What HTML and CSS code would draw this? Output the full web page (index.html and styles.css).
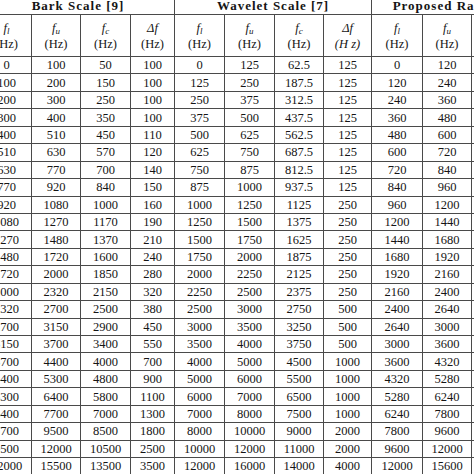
FILE: index.html
```html
<!DOCTYPE html>
<html>
<head>
<meta charset="utf-8">
<link rel="stylesheet" href="styles.css">
</head>
<body>
<table class="scales">
<colgroup>
<col class="c50"><col class="c49"><col class="c50"><col class="c44">
<col class="c50"><col class="c50"><col class="c49"><col class="c48">
<col class="c51"><col class="c49"><col class="c50"><col class="c50">
</colgroup>
<thead>
<tr class="grp">
<th colspan="4">Bark Scale [9]</th>
<th colspan="4">Wavelet Scale [7]</th>
<th colspan="4">Proposed Rational Scale</th>
</tr>
<tr class="sub">
<th><i>f</i><sub>l</sub><br>(Hz)</th>
<th><i>f</i><sub>u</sub><br>(Hz)</th>
<th><i>f</i><sub>c</sub><br>(Hz)</th>
<th><i>Δf</i><br>(Hz)</th>
<th><i>f</i><sub>l</sub><br>(Hz)</th>
<th><i>f</i><sub>u</sub><br>(Hz)</th>
<th><i>f</i><sub>c</sub><br>(Hz)</th>
<th><i>Δf</i><br><i>(H z)</i></th>
<th><i>f</i><sub>l</sub><br>(Hz)</th>
<th><i>f</i><sub>u</sub><br>(Hz)</th>
<th><i>f</i><sub>c</sub><br>(Hz)</th>
<th><i>Δf</i><br>(Hz)</th>
</tr>
</thead>
<tbody>
<tr><td>0</td><td>100</td><td>50</td><td>100</td><td>0</td><td>125</td><td>62.5</td><td>125</td><td>0</td><td>120</td><td>60</td><td>120</td></tr>
<tr><td>100</td><td>200</td><td>150</td><td>100</td><td>125</td><td>250</td><td>187.5</td><td>125</td><td>120</td><td>240</td><td>180</td><td>120</td></tr>
<tr><td>200</td><td>300</td><td>250</td><td>100</td><td>250</td><td>375</td><td>312.5</td><td>125</td><td>240</td><td>360</td><td>300</td><td>120</td></tr>
<tr><td>300</td><td>400</td><td>350</td><td>100</td><td>375</td><td>500</td><td>437.5</td><td>125</td><td>360</td><td>480</td><td>420</td><td>120</td></tr>
<tr><td>400</td><td>510</td><td>450</td><td>110</td><td>500</td><td>625</td><td>562.5</td><td>125</td><td>480</td><td>600</td><td>540</td><td>120</td></tr>
<tr><td>510</td><td>630</td><td>570</td><td>120</td><td>625</td><td>750</td><td>687.5</td><td>125</td><td>600</td><td>720</td><td>660</td><td>120</td></tr>
<tr><td>630</td><td>770</td><td>700</td><td>140</td><td>750</td><td>875</td><td>812.5</td><td>125</td><td>720</td><td>840</td><td>780</td><td>120</td></tr>
<tr><td>770</td><td>920</td><td>840</td><td>150</td><td>875</td><td>1000</td><td>937.5</td><td>125</td><td>840</td><td>960</td><td>900</td><td>120</td></tr>
<tr><td>920</td><td>1080</td><td>1000</td><td>160</td><td>1000</td><td>1250</td><td>1125</td><td>250</td><td>960</td><td>1200</td><td>1080</td><td>240</td></tr>
<tr><td>1080</td><td>1270</td><td>1170</td><td>190</td><td>1250</td><td>1500</td><td>1375</td><td>250</td><td>1200</td><td>1440</td><td>1320</td><td>240</td></tr>
<tr><td>1270</td><td>1480</td><td>1370</td><td>210</td><td>1500</td><td>1750</td><td>1625</td><td>250</td><td>1440</td><td>1680</td><td>1560</td><td>240</td></tr>
<tr><td>1480</td><td>1720</td><td>1600</td><td>240</td><td>1750</td><td>2000</td><td>1875</td><td>250</td><td>1680</td><td>1920</td><td>1800</td><td>240</td></tr>
<tr><td>1720</td><td>2000</td><td>1850</td><td>280</td><td>2000</td><td>2250</td><td>2125</td><td>250</td><td>1920</td><td>2160</td><td>2040</td><td>240</td></tr>
<tr><td>2000</td><td>2320</td><td>2150</td><td>320</td><td>2250</td><td>2500</td><td>2375</td><td>250</td><td>2160</td><td>2400</td><td>2280</td><td>240</td></tr>
<tr><td>2320</td><td>2700</td><td>2500</td><td>380</td><td>2500</td><td>3000</td><td>2750</td><td>500</td><td>2400</td><td>2640</td><td>2520</td><td>240</td></tr>
<tr><td>2700</td><td>3150</td><td>2900</td><td>450</td><td>3000</td><td>3500</td><td>3250</td><td>500</td><td>2640</td><td>3000</td><td>2820</td><td>360</td></tr>
<tr><td>3150</td><td>3700</td><td>3400</td><td>550</td><td>3500</td><td>4000</td><td>3750</td><td>500</td><td>3000</td><td>3600</td><td>3300</td><td>600</td></tr>
<tr><td>3700</td><td>4400</td><td>4000</td><td>700</td><td>4000</td><td>5000</td><td>4500</td><td>1000</td><td>3600</td><td>4320</td><td>3960</td><td>720</td></tr>
<tr><td>4400</td><td>5300</td><td>4800</td><td>900</td><td>5000</td><td>6000</td><td>5500</td><td>1000</td><td>4320</td><td>5280</td><td>4800</td><td>960</td></tr>
<tr><td>5300</td><td>6400</td><td>5800</td><td>1100</td><td>6000</td><td>7000</td><td>6500</td><td>1000</td><td>5280</td><td>6240</td><td>5760</td><td>960</td></tr>
<tr><td>6400</td><td>7700</td><td>7000</td><td>1300</td><td>7000</td><td>8000</td><td>7500</td><td>1000</td><td>6240</td><td>7800</td><td>7020</td><td>1560</td></tr>
<tr><td>7700</td><td>9500</td><td>8500</td><td>1800</td><td>8000</td><td>10000</td><td>9000</td><td>2000</td><td>7800</td><td>9600</td><td>8700</td><td>1800</td></tr>
<tr><td>9500</td><td>12000</td><td>10500</td><td>2500</td><td>10000</td><td>12000</td><td>11000</td><td>2000</td><td>9600</td><td>12000</td><td>10800</td><td>2400</td></tr>
<tr><td>12000</td><td>15500</td><td>13500</td><td>3500</td><td>12000</td><td>16000</td><td>14000</td><td>4000</td><td>12000</td><td>15600</td><td>13800</td><td>3600</td></tr>
</tbody>
</table>
</body>
</html>
```
FILE: styles.css
```css
html, body {
  margin: 0;
  padding: 0;
  background: #fff;
  overflow: hidden;
}

.scales {
  border-collapse: collapse;
  table-layout: fixed;
  width: 590px;
  margin: -4px 0 0 -19px;
  font-family: "Liberation Serif", "Times New Roman", serif;
  font-size: 12.5px;
  color: #151515;
}

.c44 { width: 44px; }
.c48 { width: 48px; }
.c49 { width: 49px; }
.c50 { width: 50px; }
.c51 { width: 51px; }

.scales th,
.scales td {
  border: 1px solid #4a4a4a;
  padding: 0;
  text-align: center;
  vertical-align: middle;
  white-space: nowrap;
}

.grp th {
  height: 17px;
  font-weight: bold;
  font-size: 13px;
  letter-spacing: 1px;
}

.sub th {
  height: 41px;
  font-weight: normal;
  line-height: 16px;
}

.sub sub {
  font-size: 9px;
  font-style: italic;
  line-height: 0;
  vertical-align: -2px;
}

.scales tbody td {
  height: 16.45px;
  line-height: 14px;
}
```
